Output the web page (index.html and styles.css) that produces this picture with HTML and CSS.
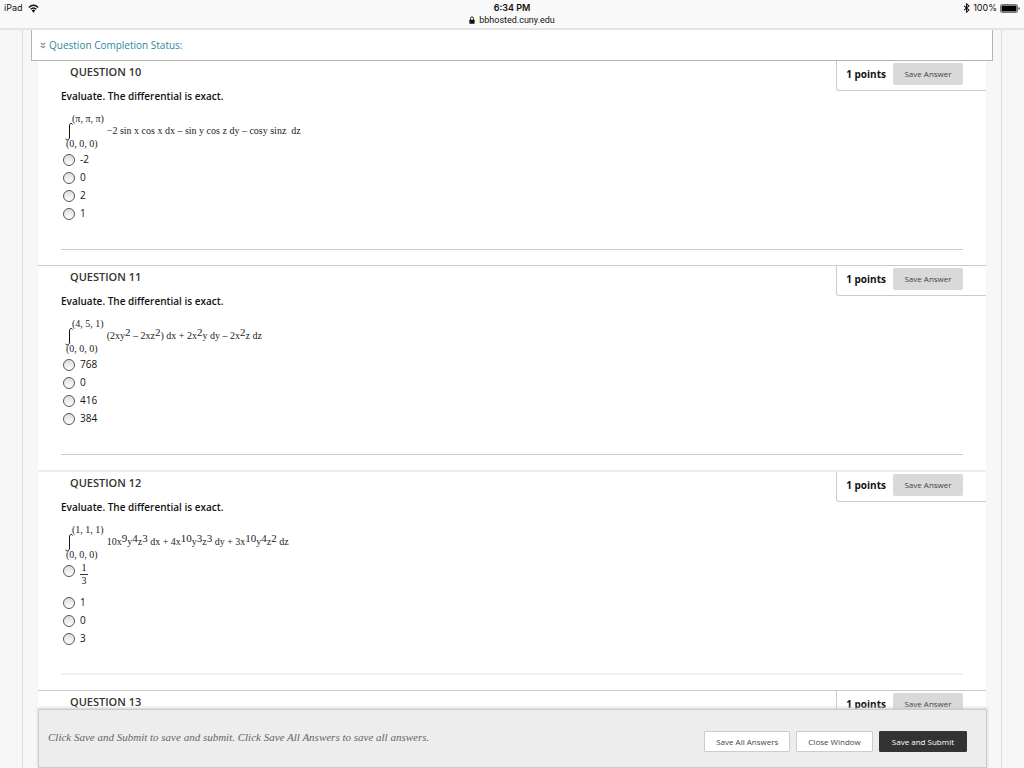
FILE: index.html
```
<!DOCTYPE html>
<html lang="en">
<head>
<meta charset="utf-8">
<meta name="viewport" content="width=device-width, initial-scale=1">
<title>Take Test</title>
<link rel="stylesheet" href="styles.css">
</head>
<body>
<header class="device-bar">
  <div class="device-left">
    <span>iPad</span>
    <svg class="wifi" viewBox="0 0 20 16" aria-hidden="true"><path d="M1.500 6Q10-2 18.500 6" /><path d="M4.800 9.500Q10 4.500 15.200 9.500" /><path class="solid" d="M6.800 11.500Q10 8.500 13.200 11.500L10 15.500Z" /></svg>
  </div>
  <div class="device-center">
    <strong>6:34 PM</strong>
    <span class="address"><svg class="lock" viewBox="0 0 10 14" aria-hidden="true"><path d="M2.500 7V4a2.500 2.500 0 0 1 5 0V7" /><rect x="0.500" y="6.500" width="9" height="7" rx="1" /></svg>bbhosted.cuny.edu</span>
  </div>
  <div class="device-right">
    <svg class="bluetooth" viewBox="0 0 10 14" aria-hidden="true"><path d="M1.500 4L8.500 10L5 13V1L8.500 4L1.500 10" /></svg>
    <span>100%</span>
    <svg class="battery" viewBox="0 0 20 9" aria-hidden="true"><rect class="case" x="0.500" y="0.500" width="17" height="8" rx="1.500" /><rect x="1.500" y="1.500" width="15" height="6" /><path d="M18.500 3.500v2h1v-2z" /></svg>
  </div>
</header>

<main class="page">
  <div class="status">
    <a class="status-link" href="#questions"><svg class="chevrons" viewBox="0 0 8 9" aria-hidden="true"><path d="M1 1L4 3.500L7 1M1 5L4 7.500L7 5" /></svg>Question Completion Status:</a>
  </div>

  <div class="questions" id="questions">
    <section class="question">
      <h2 class="title">QUESTION 10</h2>
      <div class="points"><span>1 points</span><button class="save" type="button">Save Answer</button></div>
      <p class="prompt">Evaluate. The differential is exact.</p>
      <div class="body">
        <div class="math">
          <div class="limits"><span class="upper">(π, π, π)</span><svg class="integral" viewBox="0 0 8 19" aria-hidden="true"><path d="M7.500 2.500C7 .8 4.500.8 4.500 4V15C4.500 18.200 2 18.500.5 17" /></svg><span class="lower">(0, 0, 0)</span></div>
          <div class="integrand">−2 sin x cos x dx – sin y cos z dy – cosy sinz&nbsp; dz</div>
        </div>
        <div class="options">
          <label class="option"><input type="radio" name="q10"><span>-2</span></label>
          <label class="option"><input type="radio" name="q10"><span>0</span></label>
          <label class="option"><input type="radio" name="q10"><span>2</span></label>
          <label class="option"><input type="radio" name="q10"><span>1</span></label>
        </div>
        <hr class="rule">
      </div>
    </section>

    <section class="question">
      <h2 class="title">QUESTION 11</h2>
      <div class="points"><span>1 points</span><button class="save" type="button">Save Answer</button></div>
      <p class="prompt">Evaluate. The differential is exact.</p>
      <div class="body">
        <div class="math">
          <div class="limits"><span class="upper">(4, 5, 1)</span><svg class="integral" viewBox="0 0 8 19" aria-hidden="true"><path d="M7.500 2.500C7 .8 4.500.8 4.500 4V15C4.500 18.200 2 18.500.5 17" /></svg><span class="lower">(0, 0, 0)</span></div>
          <div class="integrand">(2xy<sup>2</sup> – 2xz<sup>2</sup>) dx + 2x<sup>2</sup>y dy – 2x<sup>2</sup>z dz</div>
        </div>
        <div class="options">
          <label class="option"><input type="radio" name="q11"><span>768</span></label>
          <label class="option"><input type="radio" name="q11"><span>0</span></label>
          <label class="option"><input type="radio" name="q11"><span>416</span></label>
          <label class="option"><input type="radio" name="q11"><span>384</span></label>
        </div>
        <hr class="rule">
      </div>
    </section>

    <section class="question soft">
      <h2 class="title">QUESTION 12</h2>
      <div class="points"><span>1 points</span><button class="save" type="button">Save Answer</button></div>
      <p class="prompt">Evaluate. The differential is exact.</p>
      <div class="body">
        <div class="math">
          <div class="limits"><span class="upper">(1, 1, 1)</span><svg class="integral" viewBox="0 0 8 19" aria-hidden="true"><path d="M7.500 2.500C7 .8 4.500.8 4.500 4V15C4.500 18.200 2 18.500.5 17" /></svg><span class="lower">(0, 0, 0)</span></div>
          <div class="integrand">10x<sup>9</sup>y<sup>4</sup>z<sup>3</sup> dx + 4x<sup>10</sup>y<sup>3</sup>z<sup>3</sup> dy + 3x<sup>10</sup>y<sup>4</sup>z<sup>2</sup> dz</div>
        </div>
        <div class="options">
          <label class="option tall"><input type="radio" name="q12"><span class="fraction"><span class="numerator">1</span><span>3</span></span></label>
          <label class="option"><input type="radio" name="q12"><span>1</span></label>
          <label class="option"><input type="radio" name="q12"><span>0</span></label>
          <label class="option"><input type="radio" name="q12"><span>3</span></label>
        </div>
        <hr class="rule">
      </div>
    </section>

    <section class="question">
      <h2 class="title">QUESTION 13</h2>
      <div class="points"><span>1 points</span><button class="save" type="button">Save Answer</button></div>
    </section>
  </div>

  <footer class="submit-bar">
    <p class="hint">Click Save and Submit to save and submit. Click Save All Answers to save all answers.</p>
    <div class="actions">
      <button class="action" type="button">Save All Answers</button>
      <button class="action" type="button">Close Window</button>
      <button class="action primary" type="submit">Save and Submit</button>
    </div>
  </footer>
</main>
</body>
</html>
```
FILE: styles.css
```
* { box-sizing: border-box; }

body {
  display: flex;
  flex-direction: column;
  height: 100vh;
  margin: 0;
  overflow: hidden;
  background: #f7f7f7;
  color: #111;
  font: 10px/18px "Open Sans", "Noto Sans", sans-serif;
}

h2, p { margin: 0; }
button, input { margin: 0; font: inherit; }
svg { flex: none; fill: none; stroke: #111; }

/* Device bar */
.device-bar {
  display: grid;
  grid-template-columns: 1fr auto 1fr;
  padding: 2px 4px 2px;
  border-bottom: 2px solid #e4e4e4;
  background: #f9f9f9;
  font: 9px/12px Inter, sans-serif;
}
.device-left, .device-right { display: flex; align-items: center; height: 12px; gap: 4px; }
.device-left { gap: 5px; }
.device-right { justify-content: flex-end; gap: 3px; }
.device-center { display: flex; flex-direction: column; align-items: center; }
.device-center strong { font-weight: 600; }
.address { display: flex; align-items: center; gap: 4px; font-family: Roboto, sans-serif; }
.wifi { width: 11px; height: 9px; stroke-width: 2.500; }
.wifi .solid { fill: #111; stroke: none; }
.lock { width: 6px; height: 8px; stroke-width: 1.500; }
.lock rect { fill: #111; stroke: none; }
.bluetooth { width: 7px; height: 10px; stroke-width: 1.500; }
.battery { width: 20px; height: 9px; stroke: none; fill: #000; }
.battery .case { fill: none; stroke: #777; }

/* Page frame */
.page {
  display: flex;
  flex: 1;
  flex-direction: column;
  min-height: 0;
  margin: 0 22px;
  padding: 0 8px;
  border: solid #ddd;
  border-width: 0 1px;
}
.status {
  padding: 6px 8px;
  border: 1px solid #b5b5b5;
  border-top: 0;
  background: #fff;
}
.status-link {
  display: flex;
  align-items: center;
  gap: 3px;
  color: #2f87a0;
  text-decoration: none;
}
.chevrons { width: 6px; height: 7px; stroke: #888; stroke-width: 1.500; }

/* Questions */
.questions {
  flex: 1;
  min-height: 0;
  margin: 0 7px;
  overflow: hidden;
  background: #fff;
}
.question {
  display: grid;
  grid-template: 24px 24px auto / 1fr auto;
  border-top: 1px solid #ccc;
}
.question:first-child { border-top: 0; }
.title {
  padding: 2px 0 0 32px;
  color: #333;
  font-size: 11px;
  font-weight: 600;
  line-height: 18px;
}
.points {
  display: flex;
  grid-area: 1 / 2 / 3 / 3;
  align-items: center;
  align-self: start;
  height: 30px;
  padding: 0 23px 4px 9px;
  border: solid #ccc;
  border-width: 0 0 1px 1px;
  border-bottom-left-radius: 3px;
  gap: 7px;
  font-weight: 700;
}
.save {
  width: 70px;
  height: 22px;
  padding: 0;
  border: 0;
  border-radius: 2px;
  background: #d9d9d9;
  color: #444;
  font-size: 8px;
  font-weight: 400;
}
.prompt { padding: 2px 0 0 23px; font-weight: 600; }
.body { grid-column: 1 / 3; padding: 4px 23px 15px; }

/* Integrals */
.math {
  display: flex;
  height: 38px;
  gap: 3px;
  color: #222;
  font: 10px/12px "Liberation Serif", serif;
}
.limits { display: flex; flex-direction: column; width: max-content; }
.upper { padding-left: 11px; }
.lower { padding-left: 5px; }
.integral { width: 8px; height: 19px; margin: -3px 0 -3px 4px; }
.integrand { padding-top: 12px; }
.integrand sup { font-size: 11px; line-height: 0; vertical-align: 3px; }

/* Answers */
.option { display: flex; align-items: center; width: max-content; height: 18px; gap: 5px; }
.option > span { padding-bottom: 2px; }
.option input {
  width: 12px;
  height: 12px;
  margin-left: 2px;
  border: 1px solid #555;
  border-radius: 50%;
  appearance: none;
  background: linear-gradient(#ddd, #fff);
}
.option input:checked { background: radial-gradient(#333 35%, #eee 40%); }
.tall { align-items: flex-start; height: 32px; }
.tall input { margin-top: 3px; }
.fraction { display: flex; flex-direction: column; width: 8px; text-align: center; font: 10px/12px "Liberation Serif", serif; }
.numerator { border-bottom: 1px solid #333; }
.rule { height: 1px; margin: 26px 0 0; border: 0; background: #ccc; }
.soft { border-top: 2px solid #ededed; }
.soft .rule { height: 2px; margin-top: 25px; background: #f1f1f1; }

/* Submit bar */
.submit-bar {
  z-index: 1;
  display: flex;
  align-items: flex-start;
  justify-content: space-between;
  height: 59px;
  margin: 0 6px 0 7px;
  padding: 18px 19px 0 9px;
  border: 1px solid #ccc;
  background: #ededed;
  box-shadow: 0 -1px 3px #ccc;
}
.hint { color: #666; font: italic 11px/18px "Liberation Serif", serif; }
.actions { display: flex; flex: none; padding-top: 3px; gap: 6px; }
.action {
  height: 21px;
  padding: 0 11px;
  border: 1px solid #ccc;
  border-radius: 1px;
  background: #fff;
  color: #444;
  font-size: 8px;
  line-height: 18px;
}
.primary { padding: 0 12px; border-color: #333; background: #333; color: #fff; }
```
